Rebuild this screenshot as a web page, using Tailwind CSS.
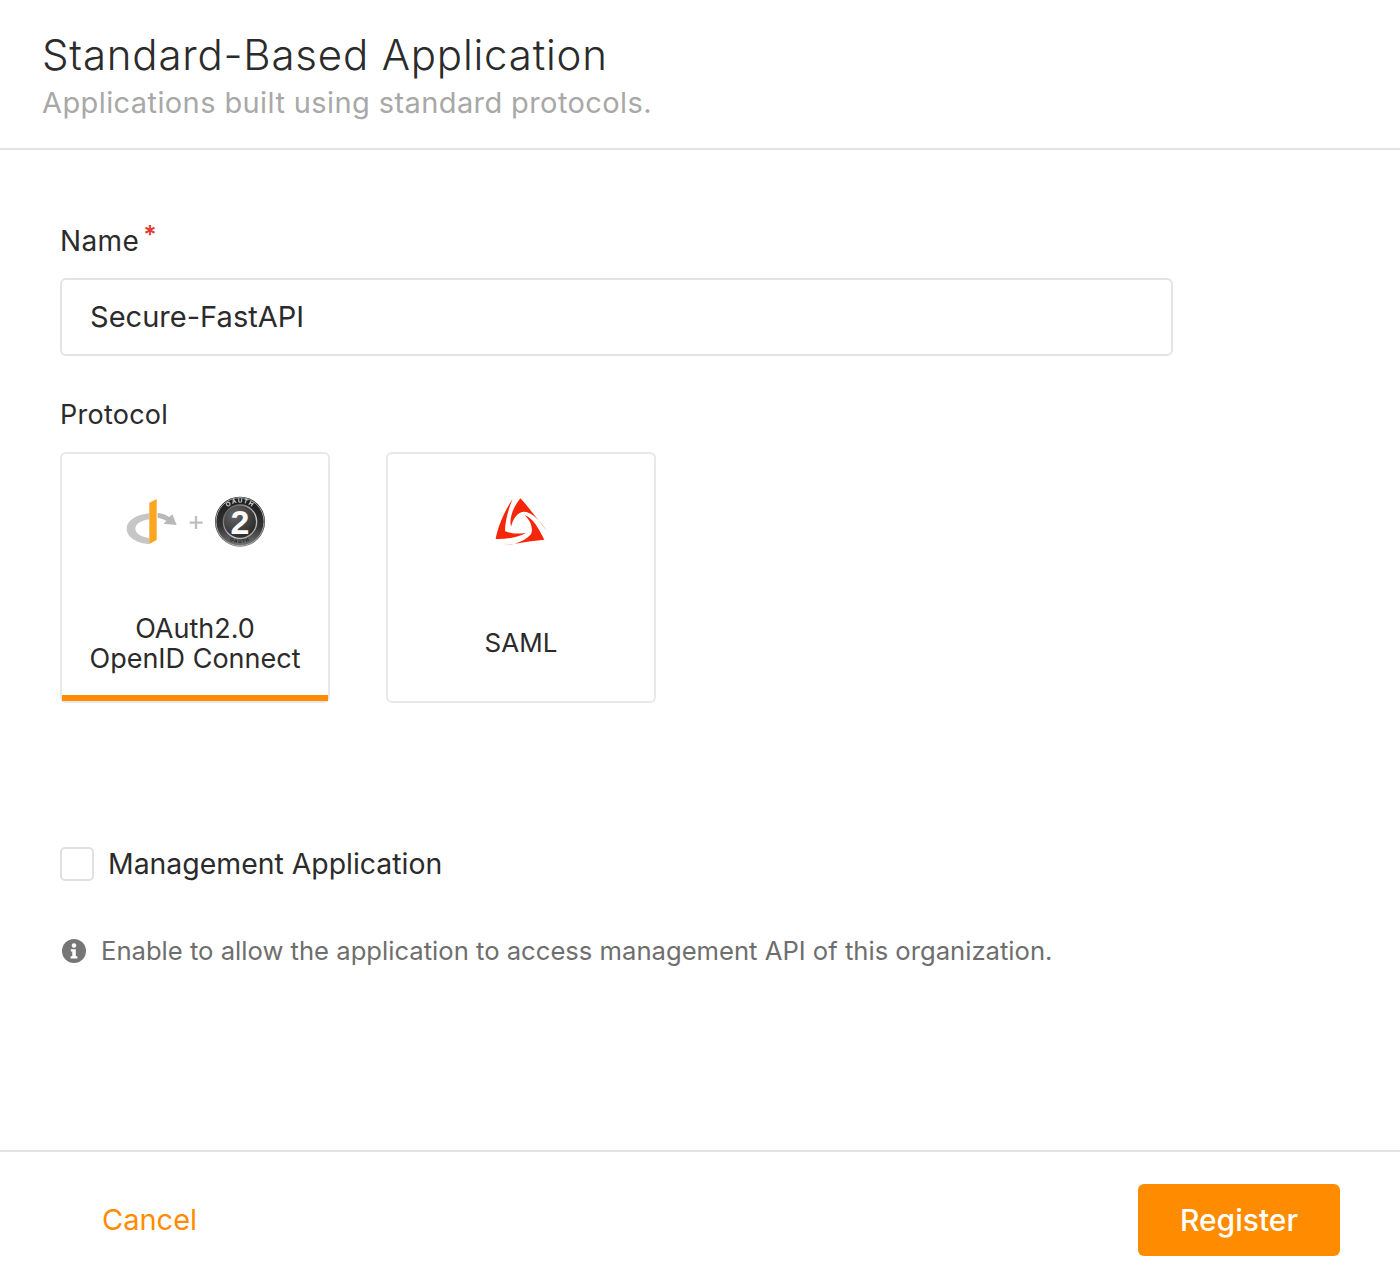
<!DOCTYPE html>
<html><head><meta charset="utf-8"><script src="https://cdn.jsdelivr.net/npm/@tailwindcss/browser@4"></script></head>
<body class="m-0 bg-white font-['Inter',sans-serif] text-[#2b2b2b]">
<div class="w-[1400px] h-[1286px] flex flex-col bg-white">
  <header class="h-[150px] shrink-0 border-b-2 border-[#e4e4e4] pl-[42px] pt-[29px]">
    <h1 class="text-[42px] leading-[52px] font-light tracking-[0.8px] whitespace-nowrap">Standard-Based Application</h1>
    <p class="text-[29px] leading-[44px] text-[#a8a8a8] tracking-[0.4px] whitespace-nowrap">Applications built using standard protocols.</p>
  </header>
  <main class="flex-1 pl-[60px] pt-[74px]">
    <label class="flex items-start h-[34px] text-[28px] leading-[34px] tracking-[0.4px]">Name<span class="text-[#e53935] text-[25px] leading-[24px] font-semibold ml-[4px] -mt-[1px]">*</span></label>
    <div class="mt-[20px] w-[1113px] h-[78px] rounded-[6px] border-2 border-[#e4e4e4] flex items-center pl-[28px] text-[29px] tracking-[0.03px] whitespace-nowrap">Secure-FastAPI</div>
    <div class="mt-[42px] text-[27px] leading-[34px] h-[34px] tracking-[0.25px]">Protocol</div>
    <div class="mt-[20px] flex gap-[56px]">
      <div class="relative w-[270px] h-[251px] rounded-[6px] border-2 border-[#e8e8e8] flex flex-col items-center">
        <svg class="mt-[26px]" width="170" height="80" viewBox="0 0 510 240">
          <defs>
            <linearGradient id="bezel" x1="0" y1="0" x2="1" y2="1"><stop offset="0" stop-color="#4a4a4a"/><stop offset="0.65" stop-color="#cfcfcf"/><stop offset="1" stop-color="#8a8a8a"/></linearGradient>
            <linearGradient id="band" x1="0" y1="0" x2="0" y2="1"><stop offset="0" stop-color="#1a1a1a"/><stop offset="0.6" stop-color="#333"/><stop offset="1" stop-color="#777"/></linearGradient>
            <radialGradient id="core" cx="0.35" cy="0.3" r="0.9"><stop offset="0" stop-color="#666"/><stop offset="1" stop-color="#1c1c1c"/></radialGradient>
            <path id="topArc" d="M333 125 A57 57 0 0 1 447 125"/>
            <path id="botArc" d="M326 125 A64 64 0 0 0 454 125"/>
          </defs>
          <path d="M118 100 C78 104 50 122 50 146 C50 172 82 190 118 192 L118 174 C94 171 76 160 76 146 C76 132 94 121 118 118 Z" fill="#c6c6c6"/>
          <path d="M118 68 L140 57 L140 180 L118 192 Z" fill="#faa61f"/>
          <path d="M143 98 C156 100 168 104 178 111 L187 103 L200 135 L160 131 L169 123 C161 118 152 115 143 114 Z" fill="#b8b8b8"/>
          <path d="M258 108 V147 M239 128 H278" stroke="#bfbfbf" stroke-width="7" fill="none"/>
          <circle cx="390" cy="125" r="75" fill="url(#band)"/>
          <circle cx="390" cy="125" r="72" fill="none" stroke="#a9a9a9" stroke-width="3"/>
          <circle cx="390" cy="125" r="50" fill="url(#core)" stroke="url(#bezel)" stroke-width="4"/>
          <text x="390" y="161" text-anchor="middle" font-family="Liberation Sans, sans-serif" font-weight="700" font-size="102" fill="#fafafa">2</text>
          <text font-family="Liberation Sans, sans-serif" font-weight="700" font-size="19" fill="#dcdcdc" letter-spacing="3"><textPath href="#topArc" startOffset="50%" text-anchor="middle">OAUTH</textPath></text>
          <text font-family="Liberation Sans, sans-serif" font-weight="700" font-size="14" fill="#1c1c1c" letter-spacing="3"><textPath href="#botArc" startOffset="50%" text-anchor="middle">OAUTH</textPath></text>
        </svg>
        <div class="mt-[54px] text-center text-[27px] leading-[30px] whitespace-nowrap">OAuth2.0<br>OpenID Connect</div>
        <div class="absolute left-0 right-0 bottom-0 h-[6px] bg-[#ff8c00]"></div>
      </div>
      <div class="w-[270px] h-[251px] rounded-[6px] border-2 border-[#e8e8e8] flex flex-col items-center">
        <svg class="mt-[31px] -ml-[1px]" width="80" height="70" viewBox="0 0 240 210">
          <path d="M95 42 C72 75 50 125 44 162 C80 163 115 156 135 143 C110 148 88 146 72 138 C72 110 82 72 95 42 Z" fill="#f5260a"/>
          <path d="M118 40 C142 65 175 110 198 138 C178 108 150 78 128 80 C108 82 96 102 90 125 C84 100 95 70 118 40 Z" fill="#f5260a"/>
          <path d="M130 90 C158 100 172 130 190 164 C150 167 100 178 65 180 C105 181 135 165 150 148 C158 130 148 105 130 90 Z" fill="#f5260a"/>
        </svg>
        <div class="mt-[73px] text-[26px] leading-[30px]">SAML</div>
      </div>
    </div>
    <div class="mt-[144px] flex items-center gap-[14px]">
      <span class="block w-[34px] h-[34px] rounded-[5px] border-2 border-[#e0e0e0]"></span>
      <span class="text-[28.4px] leading-[34px] whitespace-nowrap">Management Application</span>
    </div>
    <div class="mt-[53px] flex items-center pl-[2px] text-[#6e6e6e] text-[25.63px] leading-[34px] whitespace-nowrap">
      <svg class="w-[24px] h-[24px] mr-[15px]" viewBox="0 0 24 24"><circle cx="12" cy="12" r="12" fill="#767676"/><circle cx="12" cy="6.5" r="2.3" fill="#fff"/><path d="M8.8 10.2h5v7h1.6v2.2H8.6v-2.2h1.7v-4.8H8.8z" fill="#fff"/></svg>
      Enable to allow the application to access management API of this organization.
    </div>
  </main>
  <footer class="h-[136px] shrink-0 border-t-2 border-[#e4e4e4] flex items-center justify-between pt-[2px] pl-[102px] pr-[60px]">
    <span class="text-[29px] text-[#ff8c00]">Cancel</span>
    <span class="w-[202px] h-[72px] rounded-[6px] bg-[#ff8c00] text-white text-[30px] font-medium flex items-center justify-center">Register</span>
  </footer>
</div>
</body></html>
